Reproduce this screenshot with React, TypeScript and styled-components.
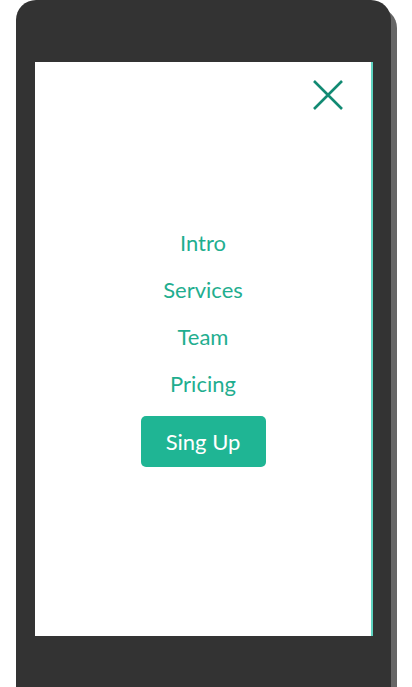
import React from "react";
import styled, { createGlobalStyle } from "styled-components";

const Global = createGlobalStyle`
  html, body { margin: 0; padding: 0; background: #ffffff; overflow: hidden; }
  body { font-family: Lato, "Open Sans", sans-serif; }
`;

const Page = styled.div`
  width: 412px;
  height: 687px;
  overflow: hidden;
  padding-left: 16px;
  box-sizing: border-box;
`;

const Phone = styled.div`
  width: 375px;
  height: 720px;
  background: #333333;
  border-radius: 20px 20px 0 0;
  box-shadow: 6px 8px 0 #666666;
  padding: 62px 18px 0 19px;
  box-sizing: border-box;
`;

const Screen = styled.div`
  position: relative;
  width: 338px;
  height: 574px;
  background: #ffffff;
  border-right: 2px solid #5fd3c0;
  box-sizing: border-box;
  display: flex;
  align-items: center;
  justify-content: center;
`;

const Close = styled.button`
  position: absolute;
  top: 17px;
  right: 27px;
  width: 32px;
  height: 32px;
  padding: 0;
  border: none;
  background: transparent;
  display: flex;
  align-items: center;
  justify-content: center;
`;

const Menu = styled.nav`
  display: flex;
  flex-direction: column;
  align-items: center;
  margin-top: -13px;
`;

const Item = styled.a`
  font-family: Lato, sans-serif;
  font-size: 22px;
  line-height: 47px;
  color: #1fae8f;
  text-decoration: none;
`;

const SignUp = styled.a`
  margin-top: 9px;
  width: 125px;
  height: 51px;
  border-radius: 5px;
  background: #1fb594;
  color: #ffffff;
  font-family: Lato, sans-serif;
  font-size: 22px;
  display: flex;
  align-items: center;
  justify-content: center;
  text-decoration: none;
`;

export default function App() {
  return (
    <>
      <Global />
      <Page>
        <Phone>
          <Screen>
            <Close aria-label="close">
              <svg width="30" height="30" viewBox="0 0 30 30">
                <path d="M1 1 L29 29 M29 1 L1 29" stroke="#128a73" strokeWidth="2.6" fill="none" />
              </svg>
            </Close>
            <Menu>
              <Item>Intro</Item>
              <Item>Services</Item>
              <Item>Team</Item>
              <Item>Pricing</Item>
              <SignUp>Sing Up</SignUp>
            </Menu>
          </Screen>
        </Phone>
      </Page>
    </>
  );
}
